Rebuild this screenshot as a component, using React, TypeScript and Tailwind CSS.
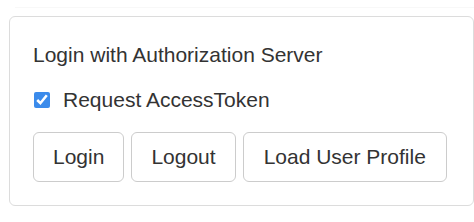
import React, { useState } from "react";

export default function App() {
  const [requestToken, setRequestToken] = useState(true);

  return (
    <div className="w-[474px] h-[222px] bg-white font-['Liberation_Sans',Arial,sans-serif] text-[#333] overflow-hidden">
      {/* faint outer rule */}
      <div className="ml-[15px] mt-[7px] h-px bg-[#f8f8f8]" />

      <div className="ml-[9px] mt-[8px] w-[465px] rounded-md border border-[#dcdcdc] px-[23px] pt-[23px] pb-[23px]">
        <div className="text-[21px] leading-[30px]">Login with Authorization Server</div>

        <label className="mt-[15px] flex items-center gap-[13px] text-[21px] leading-[30px]">
          <input
            type="checkbox"
            checked={requestToken}
            onChange={(e) => setRequestToken(e.target.checked)}
            className="ml-[1px] h-[16px] w-[16px] accent-[#3b8beb]"
          />
          Request AccessToken
        </label>

        <div className="mt-[17px] flex gap-[7px]">
          <button className="h-[50px] rounded-md border border-[#ccc] bg-white px-[19px] text-[21px] text-[#333]">
            Login
          </button>
          <button className="h-[50px] rounded-md border border-[#ccc] bg-white px-[19px] text-[21px] text-[#333]">
            Logout
          </button>
          <button className="h-[50px] rounded-md border border-[#ccc] bg-white px-[20px] text-[21px] text-[#333]">
            Load User Profile
          </button>
        </div>
      </div>
    </div>
  );
}
